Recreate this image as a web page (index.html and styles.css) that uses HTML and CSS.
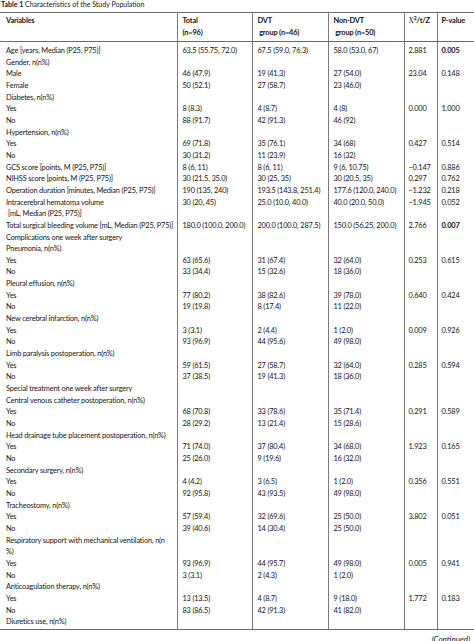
FILE: index.html
```html
<!DOCTYPE html>
<html>
<head>
<meta charset="utf-8">
<link rel="stylesheet" href="styles.css">
</head>
<body>
<div class="page">
<div class="title"><b>Table 1</b> Characteristics of the Study Population</div>
<table class="tbl">
<colgroup><col class="c1"><col class="c2"><col class="c3"><col class="c4"><col class="c5"><col class="c6"></colgroup>
<thead>
<tr><th>Variables</th><th>Total<br>(n=96)</th><th>DVT<br>&nbsp;group (n=46)</th><th>Non-DVT<br>&nbsp;group (n=50)</th><th><span class="chi">Χ</span><sup>2</sup>/t/Z</th><th>P-value</th></tr>
</thead>
<tbody>
<tr><td>Age [years, Median (P25, P75)]</td><td>63.5 (55.75, 72.0)</td><td>67.5 (59.0, 76.3)</td><td>58.0 (53.0, 67)</td><td>2.881</td><td><b>0.005</b></td></tr>
<tr><td>Gender, n(n%)</td><td></td><td></td><td></td><td></td><td></td></tr>
<tr><td>Male</td><td>46 (47.9)</td><td>19 (41.3)</td><td>27 (54.0)</td><td>23.04</td><td>0.148</td></tr>
<tr><td>Female</td><td>50 (52.1)</td><td>27 (58.7)</td><td>23 (46.0)</td><td></td><td></td></tr>
<tr><td>Diabetes, n(n%)</td><td></td><td></td><td></td><td></td><td></td></tr>
<tr><td>Yes</td><td>8 (8.3)</td><td>4 (8.7)</td><td>4 (8)</td><td>0.000</td><td>1.000</td></tr>
<tr><td>No</td><td>88 (91.7)</td><td>42 (91.3)</td><td>46 (92)</td><td></td><td></td></tr>
<tr><td>Hypertension, n(n%)</td><td></td><td></td><td></td><td></td><td></td></tr>
<tr><td>Yes</td><td>69 (71.8)</td><td>35 (76.1)</td><td>34 (68)</td><td>0.427</td><td>0.514</td></tr>
<tr><td>No</td><td>30 (31.2)</td><td>11 (23.9)</td><td>16 (32)</td><td></td><td></td></tr>
<tr><td>GCS score [points, M (P25, P75)]</td><td>8 (6, 11)</td><td>8 (6, 11)</td><td>9 (6, 10.75)</td><td>−0.147</td><td>0.886</td></tr>
<tr><td>NIHSS score [points, M (P25, P75)]</td><td>30 (21.5, 35.0)</td><td>30 (25, 35)</td><td>30 (20.5, 35)</td><td>0.297</td><td>0.762</td></tr>
<tr><td>Operation duration [minutes, Median (P25, P75)]</td><td>190 (135, 240)</td><td>193.5 (143.8, 251.4)</td><td>177.6 (120.0, 240.0)</td><td>−1.232</td><td>0.218</td></tr>
<tr><td>Intracerebral hematoma volume</td><td>30 (20, 45)</td><td>25.0 (10.0, 40.0)</td><td>40.0 (20.0, 50.0)</td><td>−1.945</td><td>0.052</td></tr>
<tr><td class="ind">[mL, Median (P25, P75)]</td><td></td><td></td><td></td><td></td><td></td></tr>
<tr><td>Total surgical bleeding volume [mL, Median (P25, P75)]</td><td>180.0 (100.0, 200.0)</td><td>200.0 (100.0, 287.5)</td><td>150.0 (56.25, 200.0)</td><td>2.766</td><td><b>0.007</b></td></tr>
<tr><td>Complications one week after surgery</td><td></td><td></td><td></td><td></td><td></td></tr>
<tr><td>Pneumonia, n(n%)</td><td></td><td></td><td></td><td></td><td></td></tr>
<tr><td>Yes</td><td>63 (65.6)</td><td>31 (67.4)</td><td>32 (64.0)</td><td>0.253</td><td>0.615</td></tr>
<tr><td>No</td><td>33 (34.4)</td><td>15 (32.6)</td><td>18 (36.0)</td><td></td><td></td></tr>
<tr><td>Pleural effusion, n(n%)</td><td></td><td></td><td></td><td></td><td></td></tr>
<tr><td>Yes</td><td>77 (80.2)</td><td>38 (82.6)</td><td>39 (78.0)</td><td>0.640</td><td>0.424</td></tr>
<tr><td>No</td><td>19 (19.8)</td><td>8 (17.4)</td><td>11 (22.0)</td><td></td><td></td></tr>
<tr><td>New cerebral infarction, n(n%)</td><td></td><td></td><td></td><td></td><td></td></tr>
<tr><td>Yes</td><td>3 (3.1)</td><td>2 (4.4)</td><td>1 (2.0)</td><td>0.009</td><td>0.926</td></tr>
<tr><td>No</td><td>93 (96.9)</td><td>44 (95.6)</td><td>49 (98.0)</td><td></td><td></td></tr>
<tr><td>Limb paralysis postoperation, n(n%)</td><td></td><td></td><td></td><td></td><td></td></tr>
<tr><td>Yes</td><td>59 (61.5)</td><td>27 (58.7)</td><td>32 (64.0)</td><td>0.285</td><td>0.594</td></tr>
<tr><td>No</td><td>37 (38.5)</td><td>19 (41.3)</td><td>18 (36.0)</td><td></td><td></td></tr>
<tr><td>Special treatment one week after surgery</td><td></td><td></td><td></td><td></td><td></td></tr>
<tr><td>Central venous catheter postoperation, n(n%)</td><td></td><td></td><td></td><td></td><td></td></tr>
<tr><td>Yes</td><td>68 (70.8)</td><td>33 (78.6)</td><td>35 (71.4)</td><td>0.291</td><td>0.589</td></tr>
<tr><td>No</td><td>28 (29.2)</td><td>13 (21.4)</td><td>15 (28.6)</td><td></td><td></td></tr>
<tr><td>Head drainage tube placement postoperation, n(n%)</td><td></td><td></td><td></td><td></td><td></td></tr>
<tr><td>Yes</td><td>71 (74.0)</td><td>37 (80.4)</td><td>34 (68.0)</td><td>1.923</td><td>0.165</td></tr>
<tr><td>No</td><td>25 (26.0)</td><td>9 (19.6)</td><td>16 (32.0)</td><td></td><td></td></tr>
<tr><td>Secondary surgery, n(n%)</td><td></td><td></td><td></td><td></td><td></td></tr>
<tr><td>Yes</td><td>4 (4.2)</td><td>3 (6.5)</td><td>1 (2.0)</td><td>0.356</td><td>0.551</td></tr>
<tr><td>No</td><td>92 (95.8)</td><td>43 (93.5)</td><td>49 (98.0)</td><td></td><td></td></tr>
<tr><td>Tracheostomy, n(n%)</td><td></td><td></td><td></td><td></td><td></td></tr>
<tr><td>Yes</td><td>57 (59.4)</td><td>32 (69.6)</td><td>25 (50.0)</td><td>3.802</td><td>0.051</td></tr>
<tr><td>No</td><td>39 (40.6)</td><td>14 (30.4)</td><td>25 (50.0)</td><td></td><td></td></tr>
<tr><td>Respiratory support with mechanical ventilation, n(n</td><td></td><td></td><td></td><td></td><td></td></tr>
<tr><td>%)</td><td></td><td></td><td></td><td></td><td></td></tr>
<tr><td>Yes</td><td>93 (96.9)</td><td>44 (95.7)</td><td>49 (98.0)</td><td>0.005</td><td>0.941</td></tr>
<tr><td>No</td><td>3 (3.1)</td><td>2 (4.3)</td><td>1 (2.0)</td><td></td><td></td></tr>
<tr><td>Anticoagulation therapy, n(n%)</td><td></td><td></td><td></td><td></td><td></td></tr>
<tr><td>Yes</td><td>13 (13.5)</td><td>4 (8.7)</td><td>9 (18.0)</td><td>1.772</td><td>0.183</td></tr>
<tr><td>No</td><td>83 (86.5)</td><td>42 (91.3)</td><td>41 (82.0)</td><td></td><td></td></tr>
<tr><td>Diuretics use, n(n%)</td><td></td><td></td><td></td><td></td><td></td></tr>
</tbody>
</table>
<div class="cont">(Continued)</div>
</div>
</body>
</html>
```
FILE: styles.css
```css
html, body {
  margin: 0;
  padding: 0;
  background: #ffffff;
}
body {
  font-family: Lato, "Liberation Sans", sans-serif;
  color: #161415;
  overflow: hidden;
}
.page {
  width: 474px;
  height: 641px;
  overflow: hidden;
}
.title {
  height: 12px;
  font-size: 7px;
  line-height: 8px;
  padding-left: 1px;
  white-space: nowrap;
}
.tbl {
  width: 474px;
  table-layout: fixed;
  border-collapse: collapse;
  border-top: 1px solid #6a6a6a;
  border-bottom: 1px solid #6a6a6a;
  font-size: 7.4px;
  letter-spacing: -0.17px;
}
.c1 { width: 177px; }
.c2 { width: 75px; }
.c3 { width: 76px; }
.c4 { width: 76px; }
.c5 { width: 33px; }
.c6 { width: 37px; }
.tbl th {
  font-weight: bold;
  text-align: left;
  vertical-align: top;
  line-height: 12px;
  padding: 2px 2px 2px 5px;
  border-bottom: 1px solid #6a6a6a;
  white-space: nowrap;
}
.tbl td {
  text-align: left;
  vertical-align: middle;
  height: 11.65px;
  line-height: 11.65px;
  padding: 0 2px 0 5px;
  white-space: nowrap;
  overflow: hidden;
}
.tbl th + th,
.tbl td + td {
  border-left: 1px solid #7a7a7a;
}
.tbl th:first-child,
.tbl td:first-child {
  padding-left: 6px;
}
.tbl th:nth-child(5),
.tbl td:nth-child(5),
.tbl th:nth-child(6),
.tbl td:nth-child(6) {
  padding-left: 4px;
}
.tbl tbody tr:first-child td {
  padding-top: 3px;
}
.tbl tbody tr:last-child td {
  padding-bottom: 1px;
}
.tbl td.ind {
  padding-left: 8px;
}
.chi {
  font-family: "Liberation Serif", serif;
  font-weight: normal;
}
.tbl sup {
  font-size: 5px;
  line-height: 0;
  vertical-align: 3px;
}
.cont {
  text-align: right;
  font-style: italic;
  font-size: 8px;
  line-height: 10px;
  padding-right: 4px;
  margin-top: 4px;
  white-space: nowrap;
}
```
